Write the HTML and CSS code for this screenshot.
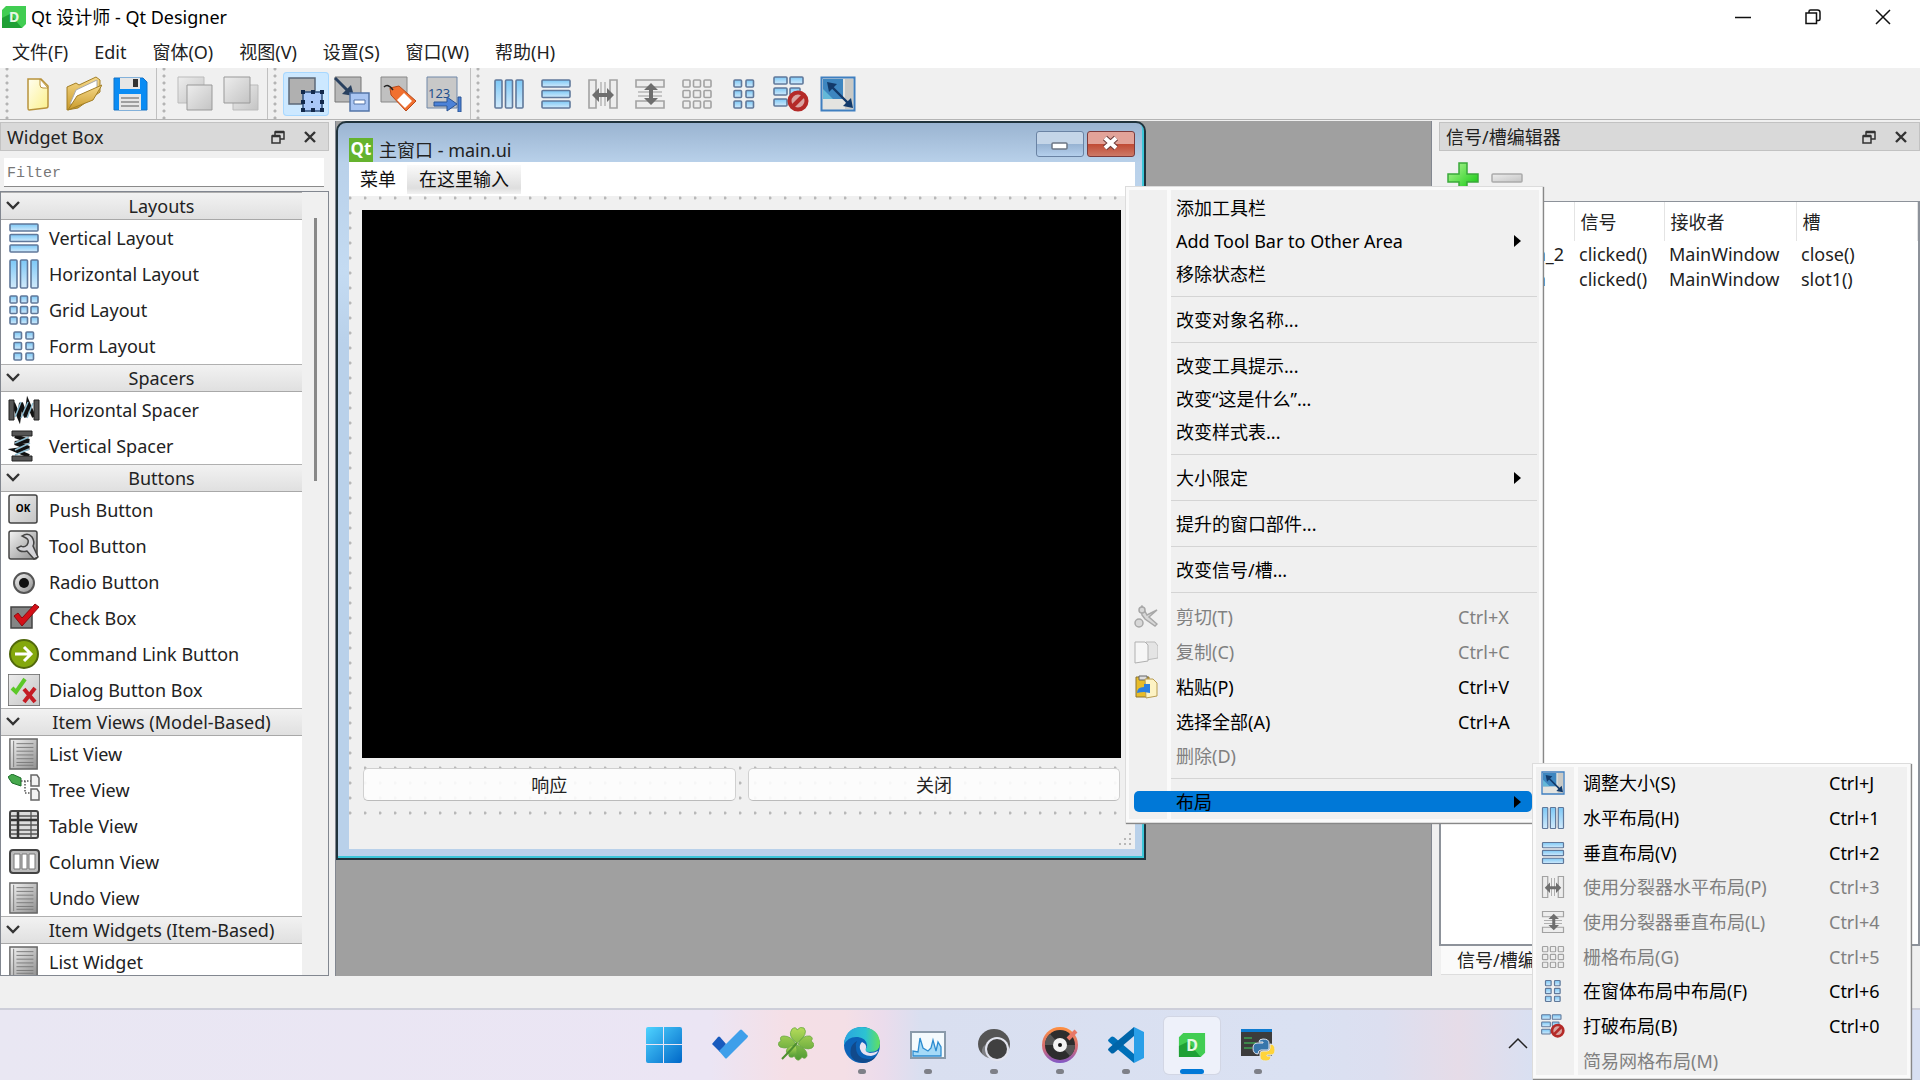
FILE: index.html
```html
<!DOCTYPE html>
<html lang="zh-CN">
<head>
    <meta charset="UTF-8">
    <meta name="viewport" content="width=device-width, initial-scale=1.0">
    <title>Qt 设计师 - Qt Designer</title>
    <link rel="stylesheet" href="styles.css">
</head>
<body>
    <!-- shared icons -->
    <svg class="sprite" aria-hidden="true">
        <defs>
            <linearGradient id="blue" x1="0" y1="0" x2="0" y2="1"><stop offset="0" stop-color="#7cc8f6"/><stop offset="1" stop-color="#d2eafb"/></linearGradient>
            <linearGradient id="grey" x1="0" y1="0" x2="1" y2="1"><stop offset="0" stop-color="#f4f4f4"/><stop offset="1" stop-color="#8e8e8e"/></linearGradient>
            <linearGradient id="light" x1="0" y1="0" x2="1" y2="1"><stop offset="0" stop-color="#ededed"/><stop offset="1" stop-color="#c4c4c4"/></linearGradient>
            <linearGradient id="gold" x1="0" y1="0" x2="0" y2="1"><stop offset="0" stop-color="#f6d98a"/><stop offset="1" stop-color="#c99a2a"/></linearGradient>
            <linearGradient id="page" x1="0" y1="0" x2="1" y2="1"><stop offset="0" stop-color="#fffef0"/><stop offset="1" stop-color="#fbf08c"/></linearGradient>
            <linearGradient id="green" x1="0" y1="0" x2="1" y2="1"><stop offset="0" stop-color="#b8f79a"/><stop offset="1" stop-color="#00c400"/></linearGradient>
            <linearGradient id="win" x1="0" y1="0" x2="1" y2="1"><stop offset="0" stop-color="#4fd3ff"/><stop offset="1" stop-color="#0067c8"/></linearGradient>
            <linearGradient id="edge" x1="0" y1="0" x2="1" y2="0"><stop offset="0" stop-color="#2aa5e0"/><stop offset=".6" stop-color="#2cc3d2"/><stop offset="1" stop-color="#62e05e"/></linearGradient>
            <linearGradient id="disc" x1="0" y1="0" x2="0" y2="1"><stop offset="0" stop-color="#ff9040"/><stop offset=".6" stop-color="#d06a78"/><stop offset="1" stop-color="#8058c8"/></linearGradient>
            <linearGradient id="leaf" x1="0" y1="0" x2="0" y2="1"><stop offset="0" stop-color="#b6dc5a"/><stop offset="1" stop-color="#4f9a34"/></linearGradient>
        </defs>
        <symbol id="i-hlay" viewBox="0 0 32 32"><g fill="url(#blue)" stroke="#60789a" stroke-width="1.600"><rect x="2" y="2" width="7" height="28" rx="1"/><rect x="12.500" y="2" width="7" height="28" rx="1"/><rect x="23" y="2" width="7" height="28" rx="1"/></g></symbol>
        <symbol id="i-vlay" viewBox="0 0 32 32"><g fill="url(#blue)" stroke="#60789a" stroke-width="1.600"><rect x="2" y="2" width="28" height="7" rx="1"/><rect x="2" y="12.500" width="28" height="7" rx="1"/><rect x="2" y="23" width="28" height="7" rx="1"/></g></symbol>
        <symbol id="i-grid" viewBox="0 0 32 32"><g fill="url(#blue)" stroke="#60789a" stroke-width="1.600"><rect x="2" y="2" width="7" height="7" rx="1"/><rect x="12.500" y="2" width="7" height="7" rx="1"/><rect x="23" y="2" width="7" height="7" rx="1"/><rect x="2" y="12.500" width="7" height="7" rx="1"/><rect x="12.500" y="12.500" width="7" height="7" rx="1"/><rect x="23" y="12.500" width="7" height="7" rx="1"/><rect x="2" y="23" width="7" height="7" rx="1"/><rect x="12.500" y="23" width="7" height="7" rx="1"/><rect x="23" y="23" width="7" height="7" rx="1"/></g></symbol>
        <symbol id="i-gridoff" viewBox="0 0 32 32"><g fill="#ededed" stroke="#a2a2a2" stroke-width="1.600"><rect x="2" y="2" width="7" height="7" rx="1"/><rect x="12.500" y="2" width="7" height="7" rx="1"/><rect x="23" y="2" width="7" height="7" rx="1"/><rect x="2" y="12.500" width="7" height="7" rx="1"/><rect x="12.500" y="12.500" width="7" height="7" rx="1"/><rect x="23" y="12.500" width="7" height="7" rx="1"/><rect x="2" y="23" width="7" height="7" rx="1"/><rect x="12.500" y="23" width="7" height="7" rx="1"/><rect x="23" y="23" width="7" height="7" rx="1"/></g></symbol>
        <symbol id="i-form" viewBox="0 0 32 32"><g fill="url(#blue)" stroke="#60789a" stroke-width="1.600"><rect x="6" y="2" width="7.500" height="7" rx="1"/><rect x="18" y="2" width="7.500" height="7" rx="1"/><rect x="6" y="12.500" width="7.500" height="7" rx="1"/><rect x="18" y="12.500" width="7.500" height="7" rx="1"/><rect x="6" y="23" width="7.500" height="7" rx="1"/><rect x="18" y="23" width="7.500" height="7" rx="1"/></g></symbol>
        <symbol id="i-splith" viewBox="0 0 32 32"><path fill="#ededed" stroke="#a2a2a2" stroke-width="1.600" d="M2 2h7v28H2zM23 2h7v28h-7z"/><path stroke="#999" d="M14 4v24M18 4v24"/><path fill="#6e6e6e" d="M5 17l7-7v5h8v-5l7 7-7 7v-5h-8v5z"/></symbol>
        <symbol id="i-splitv" viewBox="0 0 32 32"><path fill="#ededed" stroke="#a2a2a2" stroke-width="1.600" d="M2 2h28v7H2zM2 23h28v7H2z"/><path stroke="#999" d="M4 14h24M4 18h24"/><path fill="#6e6e6e" d="M17 5l7 7h-5v8h5l-7 7-7-7h5v-8h-5z"/></symbol>
        <symbol id="i-break" viewBox="0 0 36 36"><g fill="url(#blue)" stroke="#60789a" stroke-width="1.600"><rect x="1" y="1" width="13" height="7" rx="1"/><rect x="17" y="1" width="13" height="7" rx="1"/><rect x="1" y="12" width="13" height="7" rx="1"/><rect x="17" y="12" width="10" height="7" rx="1"/><rect x="1" y="23" width="13" height="7" rx="1"/></g><circle cx="25" cy="25" r="8.500" fill="#d9a5a2" stroke="#b42a28" stroke-width="4"/><path stroke="#b42a28" stroke-width="4" d="M19.500 30.500l11-11"/></symbol>
        <symbol id="i-adjust" viewBox="0 0 36 36"><path fill="#e4e4e0" stroke="#3f7fc0" stroke-width="2" d="M1.500 1.500h33v33h-33z"/><path fill="#3d86c0" d="M3 3h20v20H3z"/><path fill="#63b8d8" d="M3 13l10 10H3z"/><path fill="#c9c9c5" d="M25 3h8v30h-8z"/><path stroke="#123a6a" stroke-width="2.400" d="M10 9l20 20"/><path fill="#123a6a" d="M7 6l10 2-8 8zM33 32l-10-2 8-8z"/></symbol>
        <symbol id="i-list" viewBox="0 0 32 34"><path fill="url(#grey)" stroke="#666" stroke-width="1.500" d="M1 1h29v32H1z"/><path stroke="#7a7a7a" stroke-width="1" d="M5 3v28M8 6h18M8 10h18M8 14h18M8 18h18M8 22h18M8 26h18M8 29h18"/></symbol>
        <symbol id="i-float" viewBox="0 0 14 14"><g fill="none" stroke="#333" stroke-width="1.500"><path d="M1 6h8v7H1zM4 6V2h9v7H9"/><path stroke-width="2.500" d="M1 6h8M4 2h9"/></g></symbol>
        <symbol id="i-close" viewBox="0 0 14 14"><path stroke="#333" stroke-width="2.400" d="M2 2l10 10M12 2L2 12"/></symbol>
        <symbol id="i-down" viewBox="0 0 16 10"><path fill="none" stroke="#333" stroke-width="2.400" d="M2 1l6 6 6-6"/></symbol>
        <symbol id="i-designer" viewBox="0 0 24 22"><path fill="#41cd52" d="M4 0h20v18l-4 4H0V4z"/><path fill="#1fa035" d="M0 22V12l8-4 12 14z"/></symbol>
    </svg>

    <header class="titlebar">
        <span class="designer-logo"><svg><use href="#i-designer"/></svg><b>D</b></span>
        <h1>Qt 设计师 - Qt Designer</h1>
        <div class="window-buttons">
            <button aria-label="最小化"><svg viewBox="0 0 18 18"><path d="M1 9.500h16"/></svg></button>
            <button aria-label="还原"><svg viewBox="0 0 18 18"><path d="M2 5h10.500v10.500H2zM5 5V3.500Q5 2 6.500 2h7Q16 2 16 4.500V11q0 1.500-1.500 1.500h-2"/></svg></button>
            <button aria-label="关闭"><svg viewBox="0 0 18 18"><path d="M2 2l14 14M16 2L2 16"/></svg></button>
        </div>
    </header>

    <nav class="menubar">
        <button>文件(F)</button>
        <button>Edit</button>
        <button>窗体(O)</button>
        <button>视图(V)</button>
        <button>设置(S)</button>
        <button>窗口(W)</button>
        <button>帮助(H)</button>
    </nav>

    <div class="toolbars">
        <div class="toolbar">
            <button aria-label="新建"><svg viewBox="0 0 36 36"><path fill="url(#page)" stroke="#b8923c" stroke-width="1.500" d="M8 3h13l7 7v20q0 2-2 2L9 34q-1 0-1-2z"/><path fill="#fff" stroke="#b8923c" d="M20 3v6q0 3 3 3h5z"/></svg></button>
            <button aria-label="打开"><svg viewBox="0 0 36 36"><path fill="url(#gold)" stroke="#a37f26" d="M1 34V11l9-4 3 2 17-8 4 3v12L12 32z"/><path fill="#fff" stroke="#aaa" d="M4 28l6-14L31 4v10L10 28z"/><path fill="url(#gold)" stroke="#a37f26" d="M2 34l9-14 25-11-9 15z"/></svg></button>
            <button aria-label="保存"><svg viewBox="0 0 36 36"><path fill="#0a8cf4" stroke="#1672c4" d="M2 2h29l4 4v28H2z"/><path fill="#e6e6e6" d="M8 2h20v11H8zM7 18h22v16H7z"/><path fill="#333" d="M21 3h5v8h-5z"/><path stroke="#888" stroke-width="1.500" d="M9 22h18M9 26h18M9 30h18"/></svg></button>
        </div>
        <div class="toolbar">
            <button aria-label="置前"><svg viewBox="0 0 36 36"><path fill="url(#light)" stroke="#bbb" d="M1 1h26v26H1z"/><path fill="url(#light)" stroke="#999" d="M10 9h25v25H10z"/></svg></button>
            <button aria-label="置后"><svg viewBox="0 0 36 36"><path fill="url(#light)" stroke="#bbb" d="M10 9h25v25H10z"/><path fill="url(#light)" stroke="#999" d="M1 1h26v26H1z"/></svg></button>
        </div>
        <div class="toolbar">
            <button class="checked" aria-label="编辑窗口部件"><svg viewBox="0 0 36 36"><path fill="#b0b0b0" stroke="#5c6878" stroke-width="1.500" d="M1 2h26v26H1z"/><path fill="#aac8f8" stroke="#31507c" stroke-width="1.500" d="M15 16h19v19H15z"/><path fill="#13294b" d="M13 14h4v4h-4zM23 14h4v4h-4zM32 14h4v4h-4zM13 24h4v4h-4zM32 24h4v4h-4zM13 32h4v4h-4zM23 32h4v4h-4zM32 32h4v4h-4zM23 25h2v2h-2z"/></svg></button>
            <button aria-label="编辑信号/槽"><svg viewBox="0 0 36 36"><path fill="#b8b8b8" stroke="#777" d="M1 1h26v25H1z"/><path stroke="#29405f" stroke-width="3" d="M1 2l14 14"/><path fill="#29405f" d="M20 20L8 18l9-9z"/><path fill="#a9c5f2" stroke="#5475a8" stroke-width="1.500" d="M16 17h19v18H16z"/><path fill="#fff" stroke="#5475a8" d="M20 24h11v4H20z"/></svg></button>
            <button aria-label="编辑伙伴"><svg viewBox="0 0 36 36"><path fill="#c0c0c0" stroke="#888" d="M1 1h26v25H1z"/><path fill="#f07030" stroke="#b84818" d="M10 12l9-2 17 15-10 10-15-16z"/><path fill="#fff" d="M24 17l8 8-7 7-8-8z"/><path fill="none" stroke="#222" stroke-width="1.500" d="M13 14Q8 7 4 11"/></svg></button>
            <button aria-label="编辑 Tab 顺序"><svg viewBox="0 0 36 36"><path fill="#c8c8c8" stroke="#7088a8" d="M1 1h30v31H1z"/><text x="2" y="22" class="tab-digits">123</text><path fill="#4c82d8" stroke="#2b5494" d="M8 26h13v-5l10 7-10 7v-5H8zM32 21h3v15h-3z"/></svg></button>
        </div>
        <div class="toolbar layout-tools">
            <button aria-label="水平布局"><svg class="i32"><use href="#i-hlay"/></svg></button>
            <button aria-label="垂直布局"><svg class="i32"><use href="#i-vlay"/></svg></button>
            <button aria-label="使用分裂器水平布局"><svg class="i32"><use href="#i-splith"/></svg></button>
            <button aria-label="使用分裂器垂直布局"><svg class="i32"><use href="#i-splitv"/></svg></button>
            <button aria-label="栅格布局"><svg class="i32"><use href="#i-gridoff"/></svg></button>
            <button aria-label="在窗体布局中布局"><svg class="i32"><use href="#i-form"/></svg></button>
            <button aria-label="打破布局"><svg><use href="#i-break"/></svg></button>
            <button aria-label="调整大小"><svg><use href="#i-adjust"/></svg></button>
        </div>
    </div>

    <main class="workspace">
        <aside class="dock widget-box">
            <div class="dock-title">
                <h2>Widget Box</h2>
                <button aria-label="浮动"><svg><use href="#i-float"/></svg></button>
                <button aria-label="关闭"><svg><use href="#i-close"/></svg></button>
            </div>
            <input class="filter" type="text" placeholder="Filter" aria-label="Filter">
            <div class="tree">
                <div class="tree-list">
                    <h3><svg><use href="#i-down"/></svg><span>Layouts</span></h3>
                    <ul>
                        <li><svg><use href="#i-vlay"/></svg>Vertical Layout</li>
                        <li><svg><use href="#i-hlay"/></svg>Horizontal Layout</li>
                        <li><svg><use href="#i-grid"/></svg>Grid Layout</li>
                        <li><svg><use href="#i-form"/></svg>Form Layout</li>
                    </ul>
                    <h3><svg><use href="#i-down"/></svg><span>Spacers</span></h3>
                    <ul>
                        <li><svg viewBox="0 0 32 32"><path fill="none" stroke="#111" stroke-width="4" d="M5 9l6 14 2-14 5 14 2-14 6 14"/><path stroke="#8dbcd0" stroke-width="1.500" d="M7 23L13 8M13 24l7-16M19 24l6-15"/><path fill="#555" stroke="#222" d="M1 6h5v20H1zM26 6h5v20h-5z"/></svg>Horizontal Spacer</li>
                        <li><svg viewBox="0 0 32 32"><path fill="none" stroke="#111" stroke-width="4" d="M7 6l14 5-14 2 14 5-14 2 14 6"/><path stroke="#8dbcd0" stroke-width="1.500" d="M21 7L7 13M22 13L7 20M21 19L7 25"/><path fill="#555" stroke="#222" d="M4 1h20v5H4zM4 26h20v5H4z"/></svg>Vertical Spacer</li>
                    </ul>
                    <h3><svg><use href="#i-down"/></svg><span>Buttons</span></h3>
                    <ul>
                        <li><svg viewBox="0 0 32 32"><rect x="1" y="1" width="28" height="28" rx="2" fill="url(#light)" stroke="#444" stroke-width="1.500"/><text x="15" y="18" class="ok-label">OK</text></svg>Push Button</li>
                        <li><svg viewBox="0 0 32 32"><rect x="1" y="1" width="28" height="28" rx="2" fill="url(#grey)" stroke="#444" stroke-width="1.500"/><path fill="#d4d4d8" stroke="#444" stroke-width="1.500" d="M14 6q6-4 10 1 3 5 1 9l5 11-4 2-7-8q-7 2-10-3l4-2q3 2 6-1 3-5-1-7z"/></svg>Tool Button</li>
                        <li><svg viewBox="0 0 32 32"><circle cx="16" cy="17" r="10" fill="url(#grey)" stroke="#555" stroke-width="2"/><circle cx="16" cy="17" r="5" fill="#111"/></svg>Radio Button</li>
                        <li><svg viewBox="0 0 32 32"><path fill="#858585" stroke="#444" stroke-width="1.500" d="M3 5h21v21H3z"/><path fill="#d41018" stroke="#8c0c10" d="M6 14l4-3 4 5L27 2l4 3-17 19z"/></svg>Check Box</li>
                        <li><svg viewBox="0 0 32 32"><circle cx="16" cy="16" r="14" fill="#84a80c" stroke="#51680c" stroke-width="2"/><path fill="none" stroke="#fff" stroke-width="3" d="M7 16h15M16 9l7 7-7 7"/></svg>Command Link Button</li>
                        <li><svg viewBox="0 0 32 32"><path fill="url(#light)" stroke="#666" stroke-width="1.500" d="M0 0h32v32H0z"/><path fill="none" stroke="#5cc828" stroke-width="4" d="M4 14l4 4L17 5"/><path stroke="#c41c24" stroke-width="4" d="M16 15l11 13M27 14L16 28"/></svg>Dialog Button Box</li>
                    </ul>
                    <h3><svg><use href="#i-down"/></svg><span>Item Views (Model-Based)</span></h3>
                    <ul>
                        <li><svg><use href="#i-list"/></svg>List View</li>
                        <li><svg viewBox="0 0 32 32"><path fill="#46a84c" stroke="#1d6e2a" d="M0 3l4-3 9 4v8l-9-3z"/><path fill="none" stroke="#555" stroke-dasharray="1.500 1.500" stroke-width="1.500" d="M13 7h10M17 7v12h6"/><path fill="#f2f2f2" stroke="#666" stroke-width="1.500" d="M23 1h6l2 3v8h-8zM23 15h6l2 3v8h-8z"/></svg>Tree View</li>
                        <li><svg viewBox="0 0 32 32"><rect x="2" y="1" width="28" height="27" rx="2" fill="#ddd" stroke="#444" stroke-width="2"/><path fill="none" stroke="#555" stroke-width="1.300" d="M3 6h26M3 15h26M3 20h26M3 24h26M23 2v26"/><path stroke="#333" stroke-width="2.500" d="M3 10h26M10 2v26"/></svg>Table View</li>
                        <li><svg viewBox="0 0 32 32"><rect x="2" y="4" width="29" height="23" rx="3" fill="#bbb" stroke="#444" stroke-width="2"/><path fill="#fff" stroke="#777" d="M6 8h6v15H6zM14 8h5v15h-5zM21 8h6v15h-6z"/></svg>Column View</li>
                        <li><svg><use href="#i-list"/></svg>Undo View</li>
                    </ul>
                    <h3><svg><use href="#i-down"/></svg><span>Item Widgets (Item-Based)</span></h3>
                    <ul>
                        <li><svg><use href="#i-list"/></svg>List Widget</li>
                    </ul>
                </div>
                <div class="scrollbar"><span></span></div>
            </div>
        </aside>

        <section class="mdi">
            <div class="subwindow">
                <div class="sub-title">
                    <span class="qt-logo">Qt</span>
                    <h2>主窗口 - main.ui</h2>
                    <button class="sub-min" aria-label="最小化"><svg viewBox="0 0 20 20"><rect x="2" y="9" width="15" height="6" rx="1" fill="#fff" stroke="#6c7684" stroke-width="1.500"/></svg></button>
                    <button class="sub-close" aria-label="关闭"><svg viewBox="0 0 20 20"><path stroke="#6a3a38" stroke-width="6" d="M4 4l11 10M15 4L4 14"/><path stroke="#fff" stroke-width="4" d="M4 4l11 10M15 4L4 14"/></svg></button>
                </div>
                <div class="form">
                    <div class="form-menu"><span>菜单</span><span class="type-here">在这里输入</span></div>
                    <div class="form-body">
                        <div class="canvas"></div>
                        <div class="form-buttons">
                            <button>响应</button>
                            <button>关闭</button>
                        </div>
                    </div>
                    <div class="form-status"><svg viewBox="0 0 14 14"><path fill="#b8b8b8" d="M11 1h2v2h-2zM6 6h2v2H6zM11 6h2v2h-2zM1 11h2v2H1zM6 11h2v2H6zM11 11h2v2h-2z"/></svg></div>
                </div>
            </div>
        </section>

        <aside class="dock signal-dock">
            <div class="dock-title">
                <h2>信号/槽编辑器</h2>
                <button aria-label="浮动"><svg><use href="#i-float"/></svg></button>
                <button aria-label="关闭"><svg><use href="#i-close"/></svg></button>
            </div>
            <div class="signal-tools">
                <button aria-label="添加"><svg viewBox="0 0 32 32"><path fill="url(#green)" stroke="#3aa83a" stroke-width="1.500" d="M12 1h8v11h11v8H20v11h-8V20H1v-8h11z"/></svg></button>
                <button aria-label="删除"><svg viewBox="0 0 32 32"><rect x="1" y="12" width="30" height="8" rx="1" fill="url(#light)" stroke="#aaa" stroke-width="1.500"/></svg></button>
            </div>
            <div class="signal-view">
                <table>
                    <thead>
                        <tr><th>发送者</th><th>信号</th><th>接收者</th><th>槽</th></tr>
                    </thead>
                    <tbody>
                        <tr><td>pushButton_2</td><td>clicked()</td><td>MainWindow</td><td>close()</td></tr>
                        <tr><td>pushButton</td><td>clicked()</td><td>MainWindow</td><td>slot1()</td></tr>
                    </tbody>
                </table>
            </div>
            <button class="dock-tab">信号/槽编辑器</button>
        </aside>
    </main>

    <footer class="taskbar">
        <div class="apps">
            <button aria-label="开始"><svg viewBox="0 0 36 36"><path fill="url(#win)" d="M2 0h15v17H0V2q0-2 2-2zM18 0h16q2 0 2 2v15H18zM0 18h17v18H2q-2 0-2-2zM18 18h18v16q0 2-2 2H18z"/></svg></button>
            <button aria-label="To Do"><svg viewBox="0 0 36 36"><path fill="#185abd" d="M0 17l6-7q1-1 2 0l6 7-6 8z"/><path fill="#3e9fea" d="M7 24L28 3q1-1 2 0l5 5q2 1 0 3L15 31q-1 1-2 0z"/></svg></button>
            <button aria-label="四叶草"><svg viewBox="0 0 36 36"><g fill="url(#leaf)" stroke="#69a843" stroke-width=".8"><path d="M19 16Q9 9 14 2q4-3 5 1 3-4 7-2 5 6-7 15zM18 17Q10 23 2 20q-4-4 1-6-2-5 3-5 7 0 12 8zM20 17q4-9 12-8 4 2 1 5 5 3 1 7-7 3-14-4zM19 18q11 4 10 11-2 4-5 1-3 5-6 2-5-6 1-14z"/><path d="M18 18q3 9-3 12-5 1-4-3-4-1-2-5 3-4 9-4z"/></g><path fill="none" stroke="#4f8f30" stroke-width="2" d="M19 16Q12 24 4 32"/></svg></button>
            <button class="running" aria-label="Edge"><svg viewBox="0 0 36 36"><circle cx="18" cy="18" r="18" fill="#0c63b8"/><path fill="url(#edge)" d="M0 15Q3 0 18 0q17 1 18 16 0 9-10 9-6 0-5-3 2-1 2-4-1-7-9-8Q4 9 0 18z"/><path fill="#114a8c" d="M12 20q0 11 11 12 6 1 10-4Q28 36 19 36 4 34 7 21q1-4 6-7-2 3-1 6z"/><path fill="#e9e2f2" d="M18 15q5 2 4 6-2 4 4 5 4 0 8-2-1 4-7 5-9 0-11-7-1-4 2-7z"/></svg></button>
            <button class="running" aria-label="资源监视器"><svg viewBox="0 0 36 36"><path fill="#f4fafd" stroke="#8a9aaa" stroke-width="2" d="M1 5h34v26H1z"/><path fill="#a5daf7" stroke="#2d8cd0" stroke-width="1.300" d="M3 29V24l5 1 2-14 3 10 5 3 3-3 2-8 3 11 2-9 3 5v9z"/></svg></button>
            <button class="running" aria-label="轨道"><svg viewBox="0 0 36 36"><ellipse cx="18" cy="17" rx="16" ry="15" fill="#555"/><circle cx="21" cy="22" r="12" fill="#e2e4ee"/><circle cx="21" cy="22" r="10" fill="#404040"/><path fill="#dfe2ee" d="M10 17q1 10 5 15L8 30Q3 22 10 17z" opacity=".3"/></svg></button>
            <button class="running" aria-label="音乐"><svg viewBox="0 0 36 36"><circle cx="18" cy="18" r="18" fill="url(#disc)"/><circle cx="18" cy="18" r="15" fill="#2d2d2d"/><path fill="#555" d="M18 18L8 7Q3 11 3 18zM18 18l10 11q5-4 5-11z"/><circle cx="18" cy="18" r="7" fill="#f2f2f2"/><circle cx="18" cy="18" r="2" fill="#111"/><path stroke="#e87868" stroke-width="4" d="M26 12l8-8"/></svg></button>
            <button class="running" aria-label="VS Code"><svg viewBox="0 0 36 36"><path fill="#0070b8" d="M0 13l3-3q1-1 3 0l20 17v9L1 15Q0 14 0 13z"/><path fill="#0065a9" d="M0 23l3 3q1 1 3 0L26 9V0L1 21q-1 1-1 2z"/><path fill="#2a9fe8" d="M26 0l10 5v26l-10 5z"/></svg></button>
            <button class="active" aria-label="Qt Designer"><span class="designer-logo large"><svg><use href="#i-designer"/></svg><b>D</b></span></button>
            <button class="running" aria-label="Python"><svg viewBox="0 0 36 36"><path fill="#3c3c3c" d="M1 2h31v27H1z"/><path fill="#0f7bd0" d="M1 2h31v3H1z"/><path stroke="#3fa050" stroke-width="1.500" d="M4 11h8M4 16h12M4 21h8"/><path fill="#3776ab" stroke="#dfe6f2" d="M23 12q6 0 6 4v5q0 2-2 2h-6q-3 0-3 4-5 0-5-6 0-5 5-5h5v-1h-4q0-3 4-3z"/><path fill="#ffd43b" stroke="#dfe6f2" d="M30 17q5 0 5 6 0 5-4 5h-4v1h4q0 5-5 5-6 0-6-4v-4q0-2 3-2h4q3 0 3-3z"/></svg></button>
        </div>
        <button class="tray" aria-label="显示隐藏的图标"><svg viewBox="0 0 20 12"><path fill="none" stroke="#222" stroke-width="1.500" d="M1 11l9-9 9 9"/></svg></button>
    </footer>

    <div class="popup context-menu">
        <button>添加工具栏</button>
        <button class="more">Add Tool Bar to Other Area</button>
        <button>移除状态栏</button>
        <hr>
        <button>改变对象名称...</button>
        <hr>
        <button>改变工具提示...</button>
        <button>改变“这是什么”...</button>
        <button>改变样式表...</button>
        <hr>
        <button class="more">大小限定</button>
        <hr>
        <button>提升的窗口部件...</button>
        <hr>
        <button>改变信号/槽...</button>
        <hr>
        <button class="tall" disabled><svg viewBox="0 0 24 24"><g fill="#d8d8d8" stroke="#a8a8a8" stroke-width="1.500"><path d="M8 1l5 9 10-5-8 7 8 7-2 2-10-7-3-4-1-7z"/><circle cx="5" cy="18" r="4"/><circle cx="8" cy="5" r="3"/></g></svg>剪切(T)<kbd>Ctrl+X</kbd></button>
        <button class="tall" disabled><svg viewBox="0 0 24 24"><path fill="#e4e4e4" stroke="#bbb" d="M12 2h9l3 4v12l-12 2z"/><path fill="#f6f6f6" stroke="#b0b0b0" d="M1 2h10l3 3v16L1 23z"/></svg>复制(C)<kbd>Ctrl+C</kbd></button>
        <button class="tall"><svg viewBox="0 0 24 24"><path fill="#e8bc28" stroke="#8c7430" d="M2 2h13v20H2z"/><path fill="#ddd" stroke="#666" d="M5 1h8v4H5z"/><path fill="#fdf3c4" stroke="#b89c50" d="M11 4h8l4 4v13l-11 2z"/><path fill="#2c7fe0" d="M3 18q0-6 7-6V9h6v9l-6-1q-3 0-7 1z"/></svg>粘贴(P)<kbd>Ctrl+V</kbd></button>
        <button class="tall">选择全部(A)<kbd>Ctrl+A</kbd></button>
        <button disabled>删除(D)</button>
        <hr>
        <button class="more selected">布局</button>
    </div>

    <div class="popup layout-menu">
        <button><svg><use href="#i-adjust"/></svg>调整大小(S)<kbd>Ctrl+J</kbd></button>
        <button><svg><use href="#i-hlay"/></svg>水平布局(H)<kbd>Ctrl+1</kbd></button>
        <button><svg><use href="#i-vlay"/></svg>垂直布局(V)<kbd>Ctrl+2</kbd></button>
        <button disabled><svg><use href="#i-splith"/></svg>使用分裂器水平布局(P)<kbd>Ctrl+3</kbd></button>
        <button disabled><svg><use href="#i-splitv"/></svg>使用分裂器垂直布局(L)<kbd>Ctrl+4</kbd></button>
        <button disabled><svg><use href="#i-gridoff"/></svg>栅格布局(G)<kbd>Ctrl+5</kbd></button>
        <button><svg><use href="#i-form"/></svg>在窗体布局中布局(F)<kbd>Ctrl+6</kbd></button>
        <button><svg><use href="#i-break"/></svg>打破布局(B)<kbd>Ctrl+0</kbd></button>
        <button disabled>简易网格布局(M)</button>
    </div>
</body>
</html>
```

FILE: styles.css
```css
* {
    box-sizing: border-box;
}
body {
    margin: 0;
    height: 100vh;
    display: flex;
    flex-direction: column;
    overflow: hidden;
    position: relative;
    background-color: #f0f0f0;
    color: #222;
    font-family: "Noto Sans", "Noto Sans CJK SC", sans-serif;
    font-size: 18px;
    line-height: 24px;
}
button, input {
    font: inherit;
    color: inherit;
    border: none;
    background: none;
    padding: 0;
    margin: 0;
}
h1, h2, h3, ul {
    margin: 0;
    padding: 0;
    font-size: 18px;
    font-weight: normal;
    list-style: none;
}
svg {
    display: block;
    flex: none;
}
.sprite {
    position: absolute;
    width: 0;
    height: 0;
}

/* title bar */
.titlebar {
    display: flex;
    align-items: center;
    height: 35px;
    padding: 0 2px 2px;
    background-color: #fff;
    color: #000;
}
.titlebar h1 {
    flex: 1;
    padding-left: 5px;
}
.designer-logo {
    display: grid;
    place-items: center;
    width: 24px;
    height: 22px;
}
.designer-logo svg, .designer-logo b {
    grid-area: 1 / 1;
}
.designer-logo svg {
    width: 24px;
    height: 22px;
}
.designer-logo b {
    z-index: 1;
    color: #e6f8e4;
    font-size: 14px;
    line-height: 20px;
}
.designer-logo.large, .designer-logo.large svg {
    width: 30px;
    height: 24px;
}
.designer-logo.large b {
    font-size: 16px;
}
.window-buttons {
    display: flex;
}
.window-buttons button {
    width: 70px;
    height: 33px;
    display: grid;
    place-items: center;
}
.window-buttons svg {
    width: 18px;
    height: 18px;
    fill: none;
    stroke: #111;
    stroke-width: 1.5;
}

/* menus and toolbars */
.menubar {
    display: flex;
    gap: 2px;
    height: 33px;
    background-color: #fff;
}
.menubar button {
    padding: 0 12px;
}
.toolbars {
    display: flex;
    height: 52px;
    border-bottom: 1px solid #b4b4b4;
}
.toolbar {
    display: flex;
    align-items: center;
    padding: 1px 3px 0 15px;
    border-right: 1px solid #c0c0c0;
    background: radial-gradient(circle at 2px 2px, #b4b4b4 1px, transparent 2px) 5px 6px / 30px 7px repeat-y;
}
.layout-tools {
    gap: 1px;
    border-right: none;
}
.toolbar button {
    width: 46px;
    height: 44px;
    display: grid;
    place-items: center;
    border-radius: 4px;
}
.toolbar .checked {
    background-color: #cce8ff;
    box-shadow: inset 0 0 0 1px #a8d8ff;
}
.toolbar svg {
    width: 36px;
    height: 36px;
}
.toolbar .i32 {
    width: 32px;
    height: 32px;
}
.tab-digits {
    font-size: 13px;
    fill: #24508c;
}

/* docks */
.workspace {
    flex: 1;
    display: flex;
    min-height: 0;
    margin-bottom: 32px;
}
.dock {
    flex: none;
    display: flex;
    flex-direction: column;
    padding-top: 2px;
}
.dock-title {
    display: flex;
    align-items: center;
    gap: 18px;
    height: 29px;
    padding: 0 11px 0 6px;
    background-color: #d9d9d9;
    border: 1px solid #c2c2c2;
}
.dock-title h2 {
    flex: 1;
}
.dock-title svg {
    width: 14px;
    height: 14px;
}
.widget-box {
    width: 329px;
}
.filter {
    height: 29px;
    margin: 7px 5px 4px 4px;
    padding: 2px 3px 0;
    background-color: #fff;
    border-bottom: 1px solid #8a8a8a;
    font-family: "Liberation Mono", monospace;
    font-size: 15px;
}
.filter::placeholder {
    color: #777;
    opacity: 1;
}
.tree {
    flex: 1;
    display: flex;
    min-height: 0;
    border: 1px solid #828790;
}
.tree-list {
    flex: 1;
    overflow: hidden;
    background-color: #fff;
}
.tree h3 {
    display: flex;
    align-items: center;
    height: 28px;
    padding-left: 4px;
    background: linear-gradient(#f2f2f2, #e0e0e0);
    border-top: 1px solid #b0b0b0;
    border-bottom: 1px solid #a8a8a8;
}
.tree h3 span {
    flex: 1;
    text-align: center;
}
.tree h3 svg {
    width: 16px;
    height: 10px;
}
.tree li {
    display: flex;
    align-items: center;
    gap: 9px;
    height: 36px;
    padding-left: 7px;
}
.tree li svg {
    width: 32px;
    height: 32px;
}
.ok-label {
    font-size: 10px;
    font-weight: bold;
    text-anchor: middle;
}
.scrollbar {
    width: 26px;
    padding-top: 26px;
}
.scrollbar span {
    display: block;
    width: 3px;
    height: 263px;
    margin: 0 auto;
    background-color: #888;
}

/* form being edited */
.mdi {
    flex: 1;
    margin: 1px 7px 0 6px;
    background-color: #a0a0a0;
    border-left: 1px solid #828790;
    border-right: 1px solid #828790;
}
.subwindow {
    width: 74%;
    height: 739px;
    display: flex;
    flex-direction: column;
    padding: 0 9px 9px 11px;
    border: 2px solid #20333c;
    border-radius: 10px 10px 0 0;
    box-shadow: inset -2px -2px #3cc6d8;
    background: linear-gradient(#9ab4d1, #b9d1ea 40px, #c4dbf2 150px, #b9d1ea 220px);
}
.sub-title {
    display: flex;
    align-items: center;
    height: 39px;
    padding-top: 3px;
    color: #222;
}
.sub-title h2 {
    flex: 1;
    padding: 12px 0 0 6px;
}
.qt-logo {
    width: 24px;
    height: 24px;
    margin-top: 11px;
    background-color: #65b32e;
    color: #fff;
    font-family: "Open Sans", sans-serif;
    font-size: 17px;
    font-weight: bold;
    line-height: 22px;
    text-align: center;
}
.sub-min, .sub-close {
    width: 48px;
    height: 26px;
    margin-left: 3px;
    display: grid;
    place-items: center;
    border: 1px solid #6a83a4;
    border-radius: 3px;
    background: linear-gradient(#c4d5e8 48%, #96b2d2 50%, #b4cfec);
}
.sub-close {
    border-color: #7c3b3c;
    background: linear-gradient(#e2a399 48%, #c04a34 50%, #cd7966);
}
.sub-title svg {
    width: 20px;
    height: 20px;
}
.form {
    flex: 1;
    display: flex;
    flex-direction: column;
    background-color: #f0f0f0;
}
.form-menu {
    display: flex;
    height: 34px;
    background-color: #fff;
    line-height: 34px;
    color: #111;
}
.form-menu span {
    padding: 0 11px;
}
.form-menu .type-here {
    margin: 3px 0 2px;
    padding: 0 12px;
    line-height: 28px;
    background: linear-gradient(#fafafa, #dedede 80%, #f2f2f2);
}
.form-body {
    flex: 1;
    display: flex;
    flex-direction: column;
    gap: 10px;
    padding: 14px 14px 14px 13px;
    background: radial-gradient(circle at 1px 2px, #b8b8b8 1px, transparent 2px) 0 0 / 15px 15px;
}
.canvas {
    flex: 1;
    background-color: #000;
}
.form-buttons {
    display: flex;
    gap: 12px;
    padding: 0 1px;
}
.form-buttons button {
    flex: 1;
    height: 33px;
    background-color: rgba(253, 253, 253, 0.9);
    border: 1px solid #d0d0d0;
    border-bottom-color: #bbb;
    border-radius: 5px;
}
.form-status {
    display: flex;
    justify-content: flex-end;
    align-items: flex-end;
    height: 34px;
    padding: 3px;
}
.form-status svg {
    width: 14px;
    height: 14px;
}

/* signals and slots */
.signal-dock {
    width: 481px;
}
.signal-tools {
    display: flex;
    gap: 12px;
    height: 50px;
    padding: 11px 8px;
}
.signal-tools svg {
    width: 32px;
    height: 32px;
}
.signal-view {
    flex: 1;
    background-color: #fff;
    border: 2px solid #8d929a;
    border-width: 1px 2px 2px;
}
table {
    border-collapse: collapse;
    table-layout: fixed;
    width: 100%;
}
th {
    height: 39px;
    padding: 0 6px;
    border-right: 1px solid #e4e4e4;
    font-weight: normal;
    text-align: left;
}
th:nth-child(1) {
    width: 133px;
}
th:nth-child(2) {
    width: 90px;
}
th:nth-child(3) {
    width: 132px;
}
td {
    height: 25px;
    padding: 0 5px;
}
.dock-tab {
    align-self: flex-start;
    height: 29px;
    margin: 0 0 1px 2px;
    padding: 0 16px;
    background-color: #fafafa;
    border-bottom: 1px solid #ddd;
}

/* task bar */
.taskbar {
    display: flex;
    justify-content: center;
    height: 72px;
    border-top: 2px solid #cdced9;
    background: linear-gradient(90deg, #e9e7f3, #ebe5f4 37%, #f5dfe6 41%, #f4dfe6 44%, #ebdcec 46%, #d9dff0 48%, #dae1f2 68%, #dcdff0 72%, #e6dce8 76%, #d8e0f2 80%);
    position: relative;
}
.apps {
    display: flex;
    gap: 10px;
    padding: 7px 0 0 2px;
}
.apps button {
    width: 56px;
    height: 57px;
    display: flex;
    flex-direction: column;
    align-items: center;
    justify-content: space-between;
    padding-top: 10px;
    border-radius: 5px;
}
.apps button > svg {
    width: 36px;
    height: 36px;
}
.apps .running::after, .apps .active::after {
    content: "";
    width: 8px;
    height: 5px;
    border-radius: 3px;
    background-color: #7e8088;
}
.apps .active {
    padding-top: 16px;
    background-color: #eef1fa;
    box-shadow: 0 0 0 1px #d2d6e4;
}
.apps .active::after {
    width: 24px;
    background-color: #0078d7;
}
.tray {
    position: absolute;
    right: 392px;
    top: 27px;
}
.tray svg {
    width: 20px;
    height: 12px;
}

/* pop-up menus */
.popup {
    position: absolute;
    display: flex;
    flex-direction: column;
    border: 1px solid #dcdcdc;
    box-shadow: inset 0 0 0 3px #fafafa, 1px 1px 1px #888;
    background: linear-gradient(90deg, transparent 41px, #fafafa 41px, #fafafa 45px, transparent 45px) #f0f0f0;
    color: #000;
}
.popup button {
    position: relative;
    display: flex;
    align-items: center;
    flex: none;
    height: 33px;
    padding-left: 50px;
    text-align: left;
}
.popup button:disabled {
    color: #808080;
}
.popup .tall {
    height: 35px;
}
.popup svg {
    position: absolute;
    left: 8px;
    width: 24px;
    height: 24px;
}
.popup hr {
    width: auto;
    height: 1px;
    margin: 6px 5px 6px 45px;
    border: none;
    background-color: #d4d4d4;
}
.popup kbd {
    margin-left: auto;
    font: inherit;
    width: 84px;
}
.context-menu {
    left: 1125px;
    top: 186px;
    width: 418px;
    padding: 4px 0;
}
.popup .more::after {
    content: "";
    margin-left: auto;
    margin-right: 21px;
    border: 6px solid transparent;
    border-left: 7px solid #000;
    border-right: none;
}
.popup .selected {
    height: 21px;
    margin: 6px 10px 6px 8px;
    padding-left: 42px;
    border-radius: 5px;
    background-color: #0078d7;
}
.popup .selected::after {
    margin-right: 11px;
}
.layout-menu {
    left: 1532px;
    top: 763px;
    bottom: 1px;
    width: 379px;
    padding: 2px 0 0;
}
.layout-menu button {
    flex: 1;
}
.layout-menu kbd {
    width: 81px;
}
```
